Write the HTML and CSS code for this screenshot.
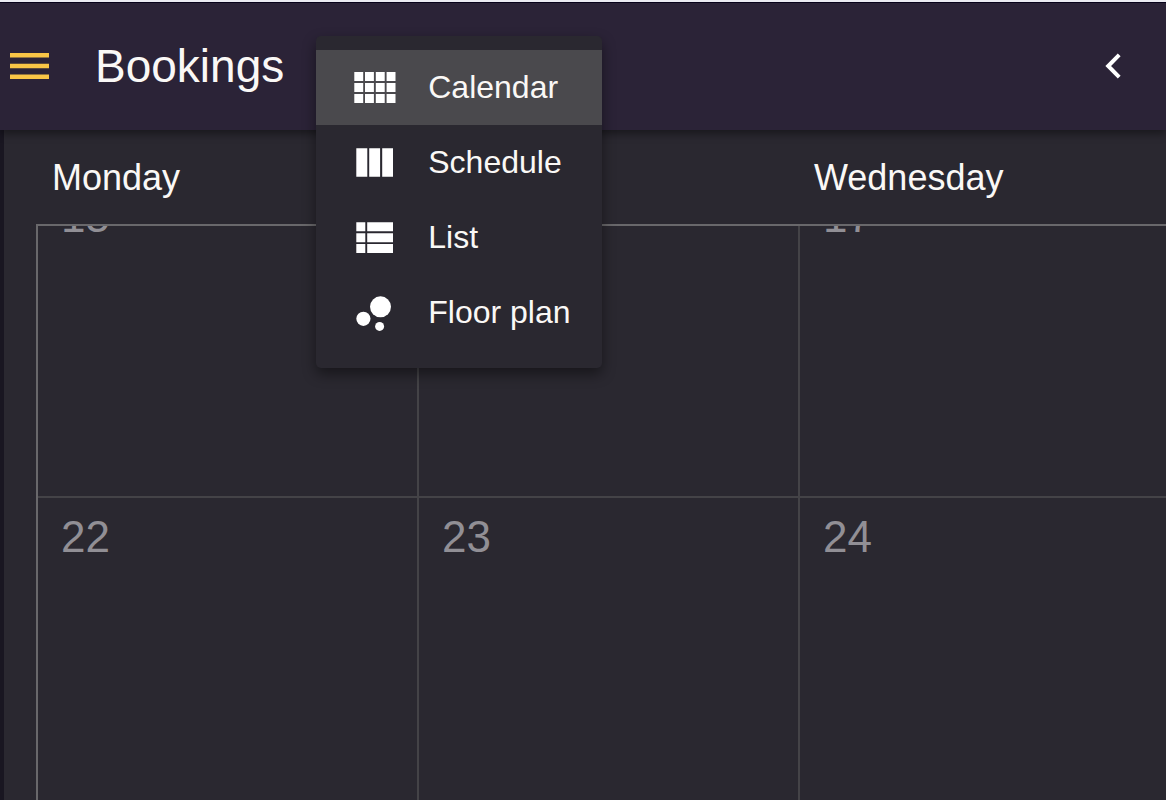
FILE: index.html
```html
<!DOCTYPE html>
<html lang="en">
<head>
    <meta charset="UTF-8">
    <meta name="viewport" content="width=device-width, initial-scale=1.0">
    <title>Bookings</title>
    <link rel="stylesheet" href="styles.css">
</head>
<body>
    <header class="topbar">
        <button class="icon-btn" type="button" aria-label="Open menu">
            <svg width="39" height="26" viewBox="0 0 39 26" fill="#f9c546">
                <path d="M0 0h39v4.4H0zM0 10.8h39v4.4H0zM0 21.6h39V26H0z"/>
            </svg>
        </button>
        <h1>Bookings</h1>

        <div class="view-picker">
            <nav class="menu" aria-label="View">
                <button class="menu-item active" type="button">
                    <svg width="45" height="45" viewBox="0 0 45 45" fill="#fff">
                        <path d="M2.3 7h8.9v9H2.3zM13 7h8.9v9H13zM23.8 7h8.9v9h-8.9zM34.6 7h8.9v9h-8.9z"/>
                        <path d="M2.3 18h8.9v9H2.3zM13 18h8.9v9H13zM23.8 18h8.9v9h-8.9zM34.6 18h8.9v9h-8.9z"/>
                        <path d="M2.3 29h8.9v9H2.3zM13 29h8.9v9H13zM23.8 29h8.9v9h-8.9zM34.6 29h8.9v9h-8.9z"/>
                    </svg>
                    Calendar
                </button>
                <button class="menu-item" type="button">
                    <svg width="45" height="45" viewBox="0 0 45 45" fill="#fff">
                        <path d="M4.3 8.3h11v28.4h-11zM17.2 8.3h10.9v28.4H17.2zM30.2 8.3H41v28.4H30.2z"/>
                    </svg>
                    Schedule
                </button>
                <button class="menu-item" type="button">
                    <svg width="45" height="45" viewBox="0 0 45 45" fill="#fff">
                        <path d="M4.3 7.3h9v9h-9zM4.3 18.2h9v9h-9zM4.3 29h9v9h-9z"/>
                        <path d="M15.2 7.3H41v9H15.2zM15.2 18.2H41v9H15.2zM15.2 29H41v9H15.2z"/>
                    </svg>
                    List
                </button>
                <button class="menu-item" type="button">
                    <svg width="45" height="45" viewBox="0 0 45 45" fill="#fff">
                        <circle cx="28.5" cy="16.8" r="10.5"/>
                        <circle cx="11.4" cy="28.8" r="7.1"/>
                        <circle cx="27.6" cy="36.4" r="4.5"/>
                    </svg>
                    Floor plan
                </button>
            </nav>
        </div>

        <button class="icon-btn prev" type="button" aria-label="Previous">
            <svg width="18" height="26" viewBox="0 0 18 26" fill="none" stroke="#fff" stroke-width="4">
                <path d="M15.2 1.9L4.2 13l11 11.1"/>
            </svg>
        </button>
    </header>

    <main class="page">
        <table class="calendar">
            <thead>
                <tr>
                    <th>Monday</th>
                    <th>Tuesday</th>
                    <th>Wednesday</th>
                </tr>
            </thead>
            <tbody>
                <tr class="scrolled">
                    <td>15</td>
                    <td>16</td>
                    <td>17</td>
                </tr>
                <tr>
                    <td>22</td>
                    <td>23</td>
                    <td>24</td>
                </tr>
            </tbody>
        </table>
    </main>
</body>
</html>
```

FILE: styles.css
```css
* {
    box-sizing: border-box;
    margin: 0;
    padding: 0;
}
body {
    height: 100vh;
    overflow: hidden;
    display: flex;
    flex-direction: column;
    background: #2a2830;
    border-top: 2px solid #ebebf2;
    color: #faf8f6;
    font-family: "Liberation Sans", Arial, sans-serif;
}
button {
    background: none;
    border: none;
    color: inherit;
    font-family: inherit;
    cursor: pointer;
}
svg {
    display: block;
    flex-shrink: 0;
}

/* top bar */
.topbar {
    position: relative;
    z-index: 1;
    display: flex;
    align-items: center;
    height: 128px;
    padding: 0 44px 2px 10px;
    background: #2b2337;
    border-top: 1px solid #07021a;
    box-shadow: 0 4px 8px rgba(0, 0, 0, 0.4);
}
.topbar h1 {
    margin-left: 46px;
    font-size: 46px;
    font-weight: normal;
    line-height: 56px;
}
.prev {
    margin-left: auto;
}

/* view menu */
.view-picker {
    position: relative;
    align-self: flex-start;
    margin-left: 32px;
}
.menu {
    position: absolute;
    top: 33px;
    left: 0;
    padding: 14px 0 18px;
    background: #2a2830;
    border-radius: 5px;
    box-shadow: 0 6px 14px rgba(0, 0, 0, 0.45);
}
.menu-item {
    display: flex;
    align-items: center;
    gap: 31px;
    width: 100%;
    height: 75px;
    padding: 0 31px 0 36px;
    font-size: 32px;
    white-space: nowrap;
}
.menu-item.active {
    background: #4a494d;
}

/* calendar */
.page {
    flex: 1;
    min-height: 0;
    padding-left: 32px;
    border-left: 4px solid #191621;
}
.calendar,
.calendar thead,
.calendar tbody {
    display: block;
}
.calendar {
    margin-right: -15px;
}
.calendar tr {
    display: grid;
    grid-template-columns: repeat(3, 1fr);
}
.calendar thead {
    padding-left: 2px;
}
.calendar th {
    padding: 2px 14px 0;
    font-size: 36px;
    font-weight: normal;
    line-height: 92px;
    text-align: left;
}
.calendar tbody {
    overflow: hidden;
    border-top: 2px solid #69686b;
    border-left: 2px solid #69686b;
}
.calendar td {
    height: 320px;
    padding: 15px 23px;
    border-right: 2px solid #444347;
    border-bottom: 2px solid #444347;
    color: #918f95;
    font-size: 44px;
    line-height: 48px;
}
.calendar .scrolled {
    margin-top: -48px;
}
```
